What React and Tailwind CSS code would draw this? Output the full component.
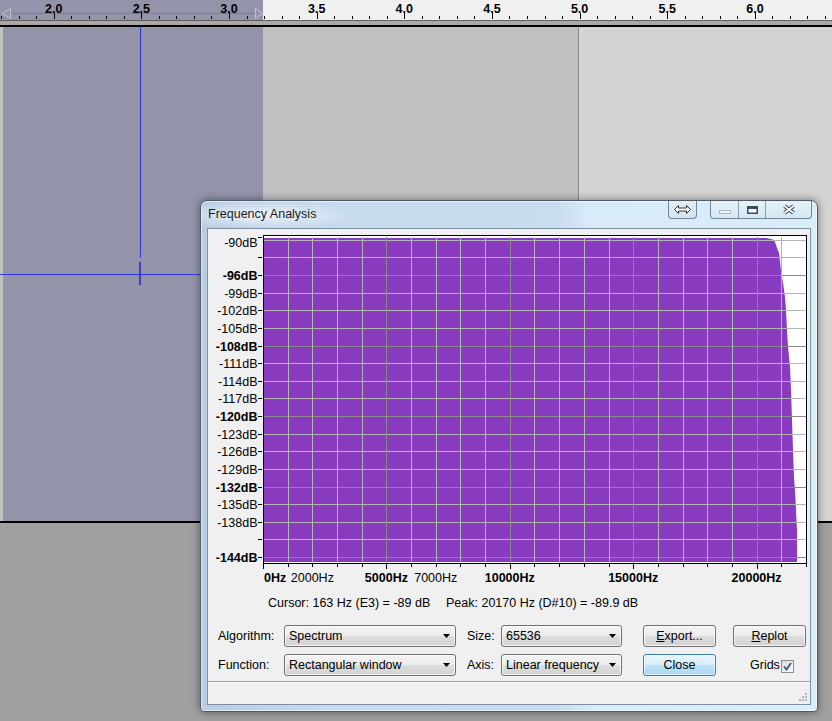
import React from "react";

const RULER_LABELS = ["2.0", "2.5", "3.0", "3.5", "4.0", "4.5", "5.0", "5.5", "6.0"];

// plot geometry, page coordinates
const fx = (f) => 263 + f * 0.02468;
const dy = (db) => 239.75 + (-90 - db) * 5.875;

const SPECTRUM = [
  [264, 238], [766, 238], [773, 239.5], [775, 242], [776, 245], [777, 248], [779, 253],
  [781, 270], [783, 283], [785, 297], [786, 310], [787, 330], [788, 347], [790, 367],
  [791, 390], [792, 420], [793, 450], [794, 478], [795, 490], [796, 510], [797, 530], [797, 562], [264, 562],
];

function Ruler() {
  const ticks = [];
  for (let i = 0; i < 48; i++) {
    const x = Math.round(1.1 + i * 17.53) + 0.5;
    const major = i % 5 === 3;
    ticks.push(<line key={i} x1={x} x2={x} y1={major ? 13 : 16} y2={19} stroke="#000" />);
  }
  return (
    <svg width="832" height="20" className="block">
      <rect x="0" y="0" width="263" height="20" fill="#9394aa" />
      <rect x="263" y="0" width="569" height="20" fill="#f0f0f0" />
      <line x1="10" x2="256" y1="13.5" y2="13.5" stroke="#7c7c88" />
      <path d="M2.5 13.5 L10.5 8.5 V18.5 Z" fill="#9394aa" stroke="#c4c4cc" />
      <path d="M262.5 13.5 L255.5 8.5 V18.5 Z" fill="#9394aa" stroke="#c4c4cc" />
      {ticks}
      {RULER_LABELS.map((t, k) => (
        <text key={t} x={53.7 + k * 87.65} y="12.5" textAnchor="middle" fontSize="12.5" fontWeight="bold" fill="#000">
          {t}
        </text>
      ))}
    </svg>
  );
}

function Plot() {
  const hLines = [];
  const yLabels = [];
  for (let db = -90; db >= -144; db -= 3) {
    const y = Math.round(dy(db)) + 0.5;
    const major = db % 12 === 0;
    hLines.push(<line key={db} x1="264" x2="806" y1={y} y2={y} stroke={major ? "#8a8a8a" : "#b4b4b4"} />);
    const ty = db === -90 ? 237.5 : y;
    yLabels.push(<line key={"t" + db} x1="258" x2="262" y1={ty} y2={ty} stroke="#000" />);
    if (db !== -93 && db !== -141) {
      yLabels.push(
        <text key={"l" + db} x="257.5" y={db === -90 ? 247 : y + 4.5} textAnchor="end" fontSize="12.5" fontWeight={major ? "bold" : "normal"} fill="#000">
          {db}dB
        </text>
      );
    }
  }
  const vLines = [];
  const xTicks = [];
  for (let f = 0; f <= 22000; f += 1000) {
    const x = Math.round(fx(f)) + 0.5;
    const major = f % 5000 === 0;
    if (f > 0) vLines.push(<line key={f} x1={x} x2={x} y1="237" y2="563" stroke={major ? "#8a8a8a" : "#b4b4b4"} />);
    xTicks.push(<line key={"t" + f} x1={x} x2={x} y1="563" y2={major ? 569 : 567} stroke="#000" />);
  }
  const xLabels = [
    [0, "0Hz", true], [2000, "2000Hz", false], [5000, "5000Hz", true], [7000, "7000Hz", false],
    [10000, "10000Hz", true], [15000, "15000Hz", true], [20000, "20000Hz", true],
  ];
  return (
    <svg width="602" height="358" className="block">
      <g transform="translate(-208 -229)">
        <rect x="263.5" y="235.5" width="543" height="328" fill="#fff" />
        <polygon points={SPECTRUM.map((p) => p.join(",")).join(" ")} fill="#893bbf" />
        {hLines}
        {vLines}
        <rect x="263.5" y="235.5" width="543" height="328" fill="none" stroke="#000" />
        {yLabels}
        {xTicks}
        {xLabels.map(([f, t, b]) => (
          <text key={t} x={f === 0 ? 264 : fx(f)} y="582" textAnchor={f === 0 ? "start" : "middle"} fontSize="12.5" fontWeight={b ? "bold" : "normal"} fill="#000">
            {t}
          </text>
        ))}
      </g>
    </svg>
  );
}

const Arrow = () => (
  <svg width="7" height="4" viewBox="0 0 7 4">
    <polygon points="0,0 7,0 3.5,4" fill="#000" />
  </svg>
);

function Select({ w, children }) {
  return (
    <div className={`${w} h-[22px] flex items-center justify-between pl-[4px] pr-[5px] rounded-[3px] border border-[#707070] bg-[linear-gradient(#f3f3f3_0%,#ececec_50%,#dedede_50%,#d2d2d2_100%)] shadow-[inset_0_0_0_1px_rgba(255,255,255,0.75)] text-[12.5px] text-black`}>
      <span>{children}</span>
      <Arrow />
    </div>
  );
}

function Button({ children, primary }) {
  return (
    <div
      className={
        primary
          ? "w-[73px] h-[22px] flex items-center justify-center rounded-[3px] border border-[#3c7fb1] bg-[linear-gradient(#e8f5fc_0%,#d6eefb_50%,#bde3f7_50%,#a9d8f3_100%)] shadow-[inset_0_0_0_1px_rgba(255,255,255,0.6)] text-[12.5px] text-black"
          : "w-[73px] h-[22px] flex items-center justify-center rounded-[3px] border border-[#707070] bg-[linear-gradient(#f3f3f3_0%,#ececec_50%,#dedede_50%,#d2d2d2_100%)] shadow-[inset_0_0_0_1px_rgba(255,255,255,0.75)] text-[12.5px] text-black"
      }
    >
      {children}
    </div>
  );
}

function TitleButtons() {
  return (
    <div className="flex items-start pr-[5px]">
      <div className="w-[29px] h-[18px] flex items-center justify-center rounded-b-[4px] border border-t-0 border-[#75879a] bg-[linear-gradient(#e4eef6,#d3e3ef)]">
        <svg width="17" height="9" viewBox="0 0 17 9">
          <path d="M0.5 4.5 L4.5 0.5 V3 H12.5 V0.5 L16.5 4.5 L12.5 8.5 V6 H4.5 V8.5 Z" fill="#fff" stroke="#333" />
        </svg>
      </div>
      <div className="ml-[13px] w-[102px] h-[18px] flex rounded-b-[4px] border border-t-0 border-[#75879a] bg-[linear-gradient(#e6f2fa,#d4e7f3)]">
        <div className="w-[28px] flex items-center justify-center border-r border-[#8d9db0] pt-[4px]">
          <svg width="12" height="4" viewBox="0 0 12 4">
            <rect x="0.5" y="0.5" width="11" height="3" fill="#edf3f8" stroke="#b0bcc8" />
          </svg>
        </div>
        <div className="w-[27px] flex items-center justify-center border-r border-[#8d9db0]">
          <svg width="11" height="8" viewBox="0 0 11 8">
            <rect x="0" y="0" width="11" height="8" fill="#3e4a57" />
            <rect x="1.5" y="3" width="8" height="3.5" fill="#f4f8fb" />
          </svg>
        </div>
        <div className="flex-1 flex items-center justify-center">
          <svg width="14" height="11" viewBox="0 0 14 11">
            <path d="M2.5 2 L11.5 9 M11.5 2 L2.5 9" stroke="#3e4a57" strokeWidth="4" />
            <path d="M2.5 2 L11.5 9 M11.5 2 L2.5 9" stroke="#fff" strokeWidth="1.8" />
          </svg>
        </div>
      </div>
    </div>
  );
}

function Dialog() {
  return (
    <div className="absolute left-[200px] top-[200px] w-[618px] h-[512px] flex flex-col rounded-t-[7px] rounded-b-[4px] border border-[#4f5a66] bg-[linear-gradient(90deg,#b9cde2_0%,#c6dbee_20%,#c9ddf0_58%,#d7ebf8_63%,#daeefa_100%)] shadow-[inset_0_0_0_1px_rgba(255,255,255,0.55),0_0_9px_rgba(0,0,0,0.45)]">
      <div className="h-[27px] flex items-start bg-[radial-gradient(ellipse_95px_14px_at_60px_14px,rgba(255,255,255,0.75),rgba(255,255,255,0))] rounded-t-[7px]">
        <span className="self-center pl-[7px] text-[12.5px] text-[#1b1b1b]">Frequency Analysis</span>
        <div className="ml-auto">
          <TitleButtons />
        </div>
      </div>
      <div className="mx-[6px] h-[477px] flex flex-col border border-[#7f8fa3] bg-[#f0f0f0]">
        <Plot />
        <div className="mt-[8px] h-[16px] flex items-center pl-[60px] text-[12.5px] text-black">
          <span className="w-[178px]">Cursor: 163 Hz (E3) = -89 dB</span>
          <span>Peak: 20170 Hz (D#10) = -89.9 dB</span>
        </div>
        <div className="mt-[14px] h-[22px] flex items-center pl-[10px] text-[12.5px] text-black">
          <span className="w-[66px]">Algorithm:</span>
          <Select w="w-[172px]">Spectrum</Select>
          <span className="ml-[11px] w-[34px]">Size:</span>
          <Select w="w-[121px]">65536</Select>
          <div className="ml-[21px]">
            <Button>
              <span className="underline">E</span>xport...
            </Button>
          </div>
          <div className="ml-[17px]">
            <Button>
              <span className="underline">R</span>eplot
            </Button>
          </div>
        </div>
        <div className="mt-[7px] h-[22px] flex items-center pl-[10px] text-[12.5px] text-black">
          <span className="w-[66px]">Function:</span>
          <Select w="w-[172px]">Rectangular window</Select>
          <span className="ml-[11px] w-[34px]">Axis:</span>
          <Select w="w-[121px]">Linear frequency</Select>
          <div className="ml-[21px]">
            <Button primary>Close</Button>
          </div>
          <span className="ml-[34px]">Grids</span>
          <div className="ml-[1px] mt-[2px] w-[13px] h-[13px] border border-[#8e8f8f] bg-[linear-gradient(135deg,#dcdcdc,#fbfbfb)] flex items-center justify-center">
            <svg width="9" height="9" viewBox="0 0 9 9">
              <path d="M1 4.5 L3.5 7.5 L8 1" fill="none" stroke="#3b5488" strokeWidth="1.8" />
            </svg>
          </div>
        </div>
        <div className="mt-[5px] h-[23px] border-t border-[#a0a0a0] shadow-[inset_0_1px_0_#ffffff] flex justify-end items-end pr-[2px] pb-[2px]">
          <svg width="10" height="10" viewBox="0 0 10 10">
            <rect x="7" y="1" width="2" height="2" fill="#b5b5b5" />
            <rect x="4" y="4" width="2" height="2" fill="#b5b5b5" />
            <rect x="7" y="4" width="2" height="2" fill="#b5b5b5" />
            <rect x="1" y="7" width="2" height="2" fill="#b5b5b5" />
            <rect x="4" y="7" width="2" height="2" fill="#b5b5b5" />
            <rect x="7" y="7" width="2" height="2" fill="#b5b5b5" />
          </svg>
        </div>
      </div>
    </div>
  );
}

export default function App() {
  return (
    <div className="relative w-[832px] h-[721px] overflow-hidden bg-[#a0a0a0] font-['Liberation_Sans',Arial,sans-serif]">
      <Ruler />
      <div className="h-[1px] bg-[#606060]" />
      <div className="h-[4px] bg-[#a8a8a8]" />
      <div className="h-[2px] bg-black" />
      <div className="relative flex h-[494px]">
        <div className="w-[3px] bg-[#c0c0c0]" />
        <div className="w-[260px] bg-[#9394a9]" />
        <div className="w-[315px] bg-[#c0c0c0]" />
        <div className="w-[1px] bg-[#8a8a8a]" />
        <div className="flex-1 bg-[#d4d4d4]" />
        {/* play cursor */}
        <div className="absolute left-[140px] top-0 w-[1px] h-[231px] bg-[#2f35e0]" />
        <div className="absolute left-[139px] top-[235px] w-[2px] h-[23px] bg-[#3d40c8]" />
        <div className="absolute left-0 top-[247px] w-[200px] h-[1px] bg-[#2f35e0]" />
      </div>
      <div className="h-[2px] bg-black" />
      <Dialog />
    </div>
  );
}
